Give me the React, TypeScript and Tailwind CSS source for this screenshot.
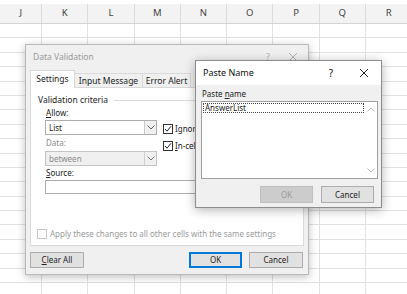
import React from "react";

const cols = ["K", "L", "M", "N", "O", "P", "Q", "R"];
const rows = Array.from({ length: 20 }, (_, i) => i);

function Chevron({ className = "" }: { className?: string }) {
  return (
    <svg width="8" height="5" viewBox="0 0 8 5" className={className}>
      <path d="M0.5 0.5 L4 4 L7.5 0.5" fill="none" stroke="currentColor" strokeWidth="1" />
    </svg>
  );
}

function Check() {
  return (
    <div className="w-[10px] h-[10px] shrink-0 border border-[#333] bg-white flex items-center justify-center">
      <svg width="8" height="8" viewBox="0 0 8 8">
        <path d="M1 4 L3 6.2 L7 1.3" fill="none" stroke="#222" strokeWidth="1" />
      </svg>
    </div>
  );
}

function CloseX({ color }: { color: string }) {
  return (
    <svg width="10" height="10" viewBox="0 0 10 10">
      <path d="M1 1 L9 9 M9 1 L1 9" stroke={color} strokeWidth="1" />
    </svg>
  );
}

export default function App() {
  return (
    <div
      className="relative w-[407px] h-[294px] overflow-hidden bg-white text-[#222] whitespace-nowrap"
      style={{ fontFamily: '"Noto Sans", "Open Sans", sans-serif' }}
    >
      {/* spreadsheet */}
      <div className="h-[4px] bg-white" />
      <div className="flex h-[20px] bg-[#f3f3f3] border-b border-[#d4d4d4] text-[9.5px] text-[#444]">
        <div className="w-[42px] shrink-0 flex items-center justify-end pr-[19px] border-r border-[#dcdcdc]">J</div>
        {cols.map((c) => (
          <div key={c} className="w-[46.29px] shrink-0 flex items-center justify-center border-r border-[#dcdcdc]">
            {c}
          </div>
        ))}
      </div>
      {rows.map((r) => (
        <div key={r} className="flex h-[14.4px] border-b border-[#e1e1e1]">
          <div className="w-[42px] shrink-0 border-r border-[#e1e1e1]" />
          {cols.map((c) => (
            <div key={c} className="w-[46.29px] shrink-0 border-r border-[#e1e1e1]" />
          ))}
        </div>
      ))}

      {/* Data Validation dialog */}
      <div className="absolute left-[25px] top-[44px] w-[284px] h-[231px] bg-[#f0f0f0] border border-[#b9b9b9] shadow-[0_2px_8px_rgba(0,0,0,0.25)] text-[8px]">
        <div className="h-[24px] flex items-center pl-[7px] text-[#9a9a9a] text-[8.5px]">
          <span>Data Validation</span>
          <span className="ml-auto mr-[18px] text-[#b0b0b0] text-[9px]">?</span>
          <span className="mr-[10px]"><CloseX color="#b0b0b0" /></span>
        </div>
        {/* tabs */}
        <div className="relative h-[19px] ml-[4px] flex items-end text-[8.5px]">
          <div className="relative z-10 h-[18px] w-[45px] bg-white border border-[#d9d9d9] border-b-0 flex items-center justify-center">
            Settings
          </div>
          <div className="h-[15px] w-[68px] border-t border-r border-[#d9d9d9] flex items-center justify-center">
            Input Message
          </div>
          <div className="h-[15px] w-[48px] border-t border-r border-[#d9d9d9] flex items-center justify-center">
            Error Alert
          </div>
        </div>
        <div className="relative -mt-px ml-[4px] w-[274px] h-[159px] bg-white border border-[#d9d9d9]">
          <div className="flex items-center mt-[6px] ml-[7px] h-[12px] text-[8.5px]">
            <span>Validation criteria</span>
            <div className="ml-[6px] flex-1 h-px bg-[#dcdcdc]" />
          </div>
          <div className="ml-[15px] mt-[1px] h-[12px] leading-[12px]">
            <span className="underline">A</span>llow:
          </div>
          <div className="flex items-start ml-[14px] mt-[1px]">
            <div className="w-[112px]">
              <div className="h-[15px] border border-[#adadad] bg-white flex items-center">
                <span className="pl-[3px] flex-1">List</span>
                <div className="w-[12px] h-full border-l border-[#c8c8c8] bg-[#f0f0f0] flex items-center justify-center text-[#606060]">
                  <Chevron />
                </div>
              </div>
              <div className="h-[16px] leading-[16px] pl-px text-[#8a8a8a]">Data:</div>
              <div className="h-[15px] border border-[#c4c4c4] bg-[#f0f0f0] flex items-center">
                <span className="pl-[3px] flex-1 text-[#8a8a8a]">between</span>
                <div className="w-[12px] h-full border-l border-[#d0d0d0] bg-[#f0f0f0] flex items-center justify-center text-[#777]">
                  <Chevron />
                </div>
              </div>
            </div>
            <div className="ml-[6px] mt-[3px] flex flex-col gap-[5px]">
              <div className="flex items-center gap-[2px]">
                <Check />
                <span>Ignore blank</span>
              </div>
              <div className="flex items-center gap-[2px]">
                <Check />
                <span><span className="underline">I</span>n-cell dropdown</span>
              </div>
            </div>
          </div>
          <div className="ml-[15px] mt-[1px] h-[12px] leading-[12px]">
            <span className="underline">S</span>ource:
          </div>
          <div className="ml-[14px] mt-[1px] w-[250px] h-[14px] border border-[#adadad] bg-white" />
          <div className="flex items-center ml-[6px] mt-[34px] gap-[3px] text-[#9a9a9a]">
            <div className="w-[10px] h-[10px] shrink-0 border border-[#c8c8c8] bg-white" />
            <span>Apply these changes to all other cells with the same settings</span>
          </div>
        </div>
        <div className="flex mt-[6px] ml-[4px] mr-[5px]">
          <div className="w-[54px] h-[16px] bg-[#e1e1e1] border border-[#adadad] flex items-center justify-center">
            <span><span className="underline">C</span>lear All</span>
          </div>
          <div className="ml-auto w-[53px] h-[16px] bg-[#e1e1e1] border-[2px] border-[#0078d7] flex items-center justify-center">
            OK
          </div>
          <div className="ml-[7px] w-[54px] h-[16px] bg-[#e1e1e1] border border-[#adadad] flex items-center justify-center">
            Cancel
          </div>
        </div>
      </div>

      {/* Paste Name dialog */}
      <div className="absolute left-[195px] top-[60px] w-[187px] h-[148px] bg-[#f0f0f0] border border-[#8c8c8c] shadow-[0_2px_10px_rgba(0,0,0,0.3)] text-[8px]">
        <div className="h-[24px] bg-white flex items-center pl-[7px] text-[9px] text-[#111]">
          <span>Paste Name</span>
          <span className="ml-auto mr-[26px] text-[10px]">?</span>
          <span className="mr-[12px]"><CloseX color="#222" /></span>
        </div>
        <div className="ml-[6px] mt-[3px] h-[12px] leading-[12px]">
          Paste <span className="underline">n</span>ame
        </div>
        <div className="ml-[5px] mt-px w-[177px] h-[78px] bg-white border border-[#a0a0a0] flex">
          <div className="flex-1 pt-px pl-px">
            <div className="h-[10px] w-[161px] border border-dotted border-[#444] leading-[8px] pl-px">AnswerList</div>
          </div>
          <div className="w-[12px] flex flex-col items-center justify-between py-[5px] text-[#b8b8b8]">
            <Chevron className="rotate-180" />
            <Chevron />
          </div>
        </div>
        <div className="flex justify-end mt-[7px] mr-[7px] gap-[8px]">
          <div className="w-[53px] h-[17px] bg-[#cccccc] border border-[#bfbfbf] flex items-center justify-center text-[#9a9a9a]">
            OK
          </div>
          <div className="w-[53px] h-[17px] bg-[#e1e1e1] border border-[#adadad] flex items-center justify-center">
            Cancel
          </div>
        </div>
      </div>
    </div>
  );
}
